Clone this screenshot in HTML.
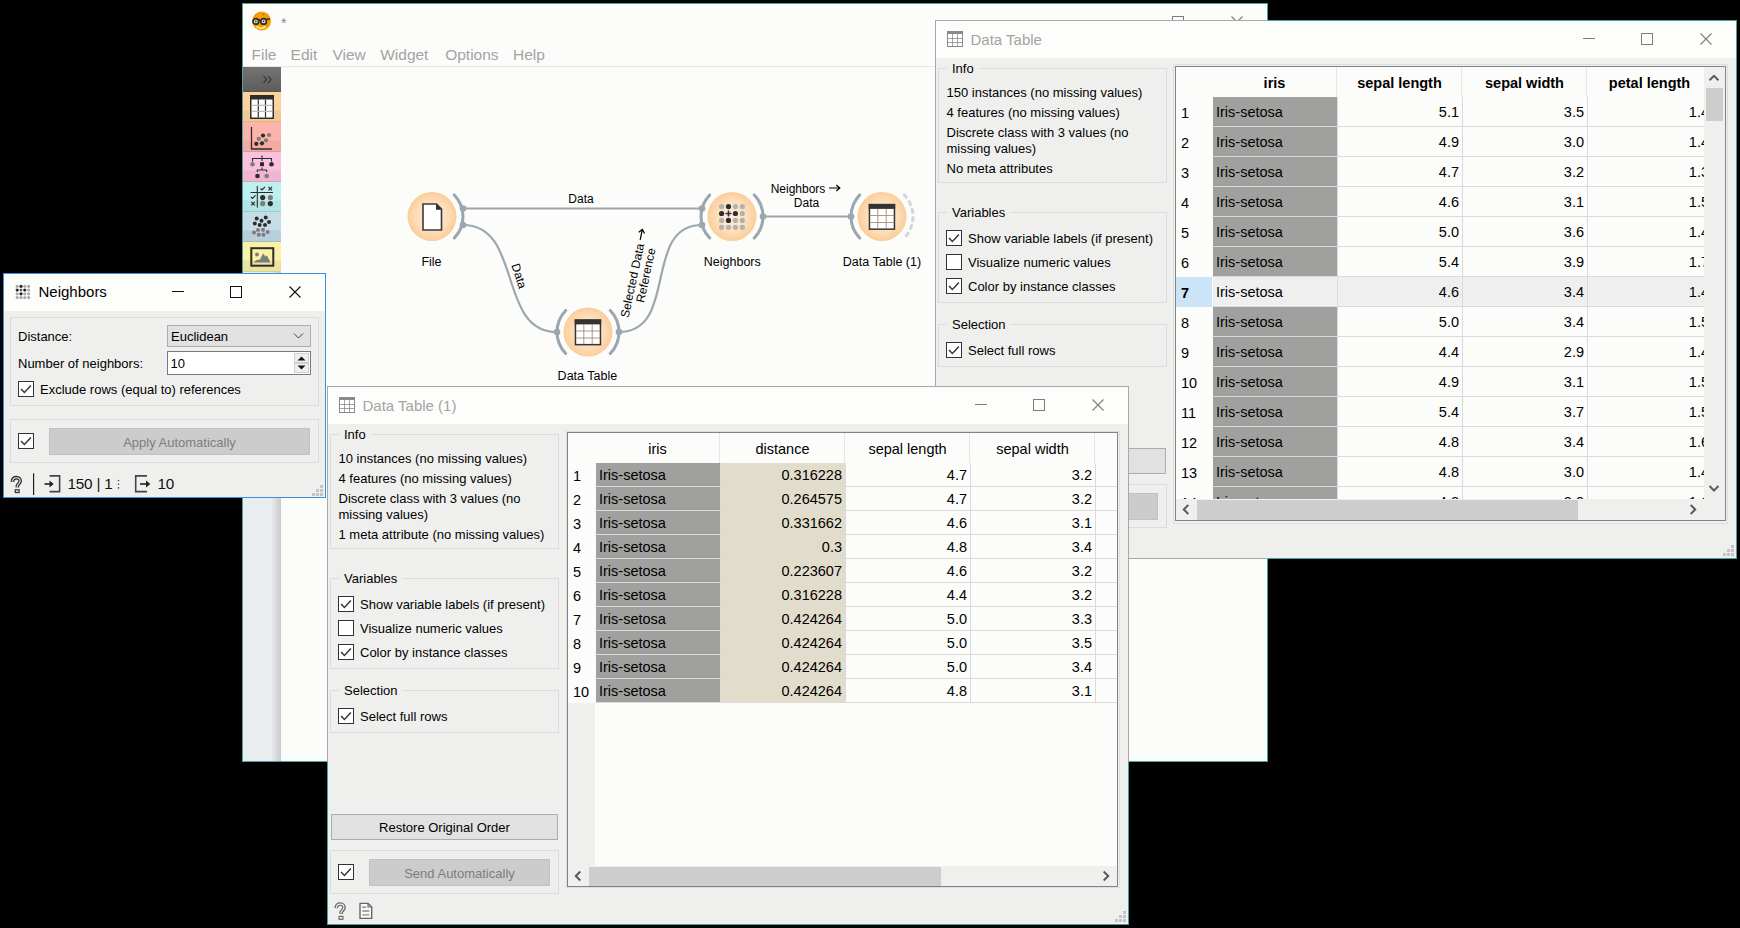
<!DOCTYPE html><html><head><meta charset="utf-8"><style>

html,body{margin:0;padding:0;}
body{width:1740px;height:928px;overflow:hidden;position:relative;background:#000;font-family:"Liberation Sans", sans-serif;}
div{box-sizing:border-box;}
.t{position:absolute;white-space:nowrap;line-height:1;}
.win{position:absolute;overflow:hidden;}
svg{position:absolute;overflow:visible;}

</style></head><body>
<div class="win" style="left:242px;top:3px;width:1026px;height:759px;background:#fcfdfb;border:1px solid #4aa3a3;"><div style="position:absolute;left:-243px;top:-4px;width:1740px;height:928px;">
<svg style="left:251px;top:12px" width="22" height="22" viewBox="0 0 22 22"><circle cx="10.6" cy="9" r="9.4" fill="#f59d00"/><path d="M5.5 14.6 Q10 17.8 14.8 14.6" stroke="#fde58a" stroke-width="2" fill="none"/><circle cx="4.8" cy="9.4" r="2.8" fill="#e6e6e6" stroke="#2b2b2b" stroke-width="1.7"/><circle cx="12.6" cy="9.4" r="2.8" fill="#e6e6e6" stroke="#2b2b2b" stroke-width="1.7"/><path d="M7.6 8.6 Q8.7 7.6 9.8 8.6 M15.3 7.6 L19 6.8" stroke="#2b2b2b" stroke-width="1.5" fill="none"/><circle cx="4.8" cy="9.4" r="0.8" fill="#222"/><circle cx="12.6" cy="9.4" r="0.8" fill="#222"/><circle cx="12.6" cy="2.6" r="0.6" fill="#555"/></svg>
<div class="t" style="left:281px;top:15.5px;font-size:14px;color:#7a8aa0;">*</div>
<div class="t" style="left:251.5px;top:47px;font-size:15.5px;color:#a3a3a3;">File</div>
<div class="t" style="left:290.6px;top:47px;font-size:15.5px;color:#a3a3a3;">Edit</div>
<div class="t" style="left:332.4px;top:47px;font-size:15.5px;color:#a3a3a3;">View</div>
<div class="t" style="left:380.2px;top:47px;font-size:15.5px;color:#a3a3a3;">Widget</div>
<div class="t" style="left:445.2px;top:47px;font-size:15.5px;color:#a3a3a3;">Options</div>
<div class="t" style="left:513px;top:47px;font-size:15.5px;color:#a3a3a3;">Help</div>
<div style="position:absolute;left:243px;top:66px;width:1024px;height:1px;background:#e6e6e6"></div>
<div style="position:absolute;left:243px;top:67px;width:38px;height:25px;background:linear-gradient(#737373,#5d5d5d);border-bottom:1px solid #555"></div>
<svg style="left:243px;top:67px" width="38" height="25"><path d="M20.5 9 L23.5 12.5 L20.5 16 M25 9 L28 12.5 L25 16" stroke="#2e2e2e" stroke-width="1.1" fill="none"/></svg>
<div style="position:absolute;left:243px;top:92px;width:38px;height:30px;background:linear-gradient(#fdd39b 0,#fdd39b 18px,#f1c892 19px,#f1c892 29px,#dcb684 29px);"></div>
<div style="position:absolute;left:243px;top:122px;width:38px;height:30px;background:linear-gradient(#fcb4aa 0,#fcb4aa 18px,#f2aaa2 19px,#f2aaa2 29px,#d89a94 29px);"></div>
<div style="position:absolute;left:243px;top:152px;width:38px;height:30px;background:linear-gradient(#f9c1dd 0,#f9c1dd 18px,#f0b5d0 19px,#f0b5d0 29px,#d6a3bb 29px);"></div>
<div style="position:absolute;left:243px;top:182px;width:38px;height:30px;background:linear-gradient(#bfefef 0,#bfefef 18px,#b3e3e3 19px,#b3e3e3 29px,#9ccdcd 29px);"></div>
<div style="position:absolute;left:243px;top:212px;width:38px;height:30px;background:linear-gradient(#c6dde8 0,#c6dde8 18px,#b8cfdb 19px,#b8cfdb 29px,#a5bcc8 29px);"></div>
<div style="position:absolute;left:243px;top:242px;width:38px;height:30px;background:linear-gradient(#faf1a6 0,#faf1a6 18px,#ede3a0 19px,#ede3a0 29px,#d6cd8f 29px);"></div>
<svg style="left:243px;top:92px" width="38" height="30"><rect x="7" y="3" width="24" height="24" fill="#2d2d2d"/><rect x="8.5" y="7.5" width="21" height="18" fill="#fff"/><path d="M15.3 7.5 V25.5 M22.5 7.5 V25.5" stroke="#2d2d2d" stroke-width="1.2"/><path d="M8.5 13.3 H29.5 M8.5 19.3 H29.5" stroke="#bbb" stroke-width="1.2"/></svg>
<svg style="left:243px;top:122px" width="38" height="30"><path d="M8.5 5 V27 H29" stroke="#2d2d2d" stroke-width="1.3" fill="none"/><circle cx="20" cy="13.5" r="2.1" fill="#2d2d2d"/><circle cx="26" cy="13" r="2.1" fill="#7c7c7c"/><circle cx="15.8" cy="16.8" r="2.1" fill="#7c7c7c"/><circle cx="23" cy="18.3" r="2.1" fill="#7c7c7c"/><circle cx="13.3" cy="21.8" r="2.1" fill="#2d2d2d"/><circle cx="19" cy="21.3" r="2.1" fill="#2d2d2d"/></svg>
<svg style="left:243px;top:152px" width="38" height="30"><path d="M9.5 9.5 V6.5 H28.5 V9.5 M19 3.5 V9 M14.3 20 V18 H23.7 V20 M19 15.5 V18" stroke="#2d2d2d" stroke-width="1.1" fill="none"/><circle cx="9.5" cy="12.2" r="2.3" fill="#7c7c7c"/><rect x="17" y="10.2" width="4" height="4" fill="#2d2d2d"/><circle cx="28.5" cy="12.2" r="2.3" fill="#2d2d2d"/><circle cx="14.5" cy="24" r="2.3" fill="#2d2d2d"/><circle cx="23.7" cy="24" r="2.3" fill="#7c7c7c"/></svg>
<svg style="left:243px;top:182px" width="38" height="30"><path d="M14.3 4 V25.5 M7.5 10.5 H30" stroke="#2d2d2d" stroke-width="1.1" fill="none"/><path d="M17.5 6.5 L19 8 L22 4.8 M25.5 4.8 L29 8.3 M29 4.8 L25.5 8.3 M8 15 L9.5 16.5 L12.5 13.3 M8.3 19.8 L11.8 23.3 M11.8 19.8 L8.3 23.3" stroke="#2d2d2d" stroke-width="1.2" fill="none"/><circle cx="19.7" cy="15.6" r="2.6" fill="#2d2d2d"/><circle cx="27.3" cy="15.6" r="2.6" fill="#7c7c7c"/><circle cx="19.7" cy="21.6" r="2.6" fill="#7c7c7c"/><circle cx="27.3" cy="21.6" r="2.6" fill="#2d2d2d"/></svg>
<svg style="left:243px;top:212px" width="38" height="30"><circle cx="13.699999999999989" cy="6.599999999999994" r="2" fill="#2d2d2d"/><circle cx="18.5" cy="8.699999999999989" r="2" fill="#2d2d2d"/><circle cx="22.69999999999999" cy="5.599999999999994" r="2" fill="#2d2d2d"/><circle cx="26" cy="10" r="2" fill="#2d2d2d"/><circle cx="11.800000000000011" cy="11.5" r="2" fill="#2d2d2d"/><circle cx="16.69999999999999" cy="13" r="2" fill="#2d2d2d"/><circle cx="22" cy="13" r="2" fill="#2d2d2d"/><circle cx="15" cy="18" r="2" fill="#7c7c7c"/><circle cx="20" cy="17.80000000000001" r="2" fill="#7c7c7c"/><circle cx="11" cy="20.400000000000006" r="2" fill="#7c7c7c"/><circle cx="24.69999999999999" cy="20" r="2" fill="#7c7c7c"/><circle cx="15.800000000000011" cy="22.69999999999999" r="2" fill="#7c7c7c"/><circle cx="20.5" cy="22.69999999999999" r="2" fill="#7c7c7c"/></svg>
<svg style="left:243px;top:242px" width="38" height="30"><rect x="8.3" y="6.2" width="22" height="17.5" fill="none" stroke="#2d2d2d" stroke-width="2"/><circle cx="14" cy="12.5" r="1.9" fill="#7c7c7c"/><path d="M10.5 20.5 Q13 17.5 17 17.5 L20 11.5 L22.5 14.5 L24 13.5 L27.5 20.5 Z" fill="#7c7c7c"/></svg>
<div style="position:absolute;left:243px;top:272px;width:38px;height:489px;background:linear-gradient(90deg,#e9edf0 0,#e9edf0 28px,#dcdedf 32px,#c8c9ca 38px);"></div>
<svg style="left:0;top:0" width="1740" height="928">
<defs><radialGradient id="ng" cx="50%" cy="50%" r="50%"><stop offset="0" stop-color="#fdefe0"/><stop offset="0.6" stop-color="#fddfbd"/><stop offset="1" stop-color="#fbcd98"/></radialGradient></defs>
<path d="M463 208.5 H702" stroke="#9ba7ae" stroke-width="2.2" fill="none"/>
<path d="M463 225 C523 225 497 332 557 332" stroke="#9ba7ae" stroke-width="2.2" fill="none"/>
<path d="M619 332 C679 332 642 225 702 225" stroke="#9ba7ae" stroke-width="2.2" fill="none"/>
<path d="M763 216.5 H851" stroke="#9ba7ae" stroke-width="2.2" fill="none"/>
<circle cx="432" cy="216.5" r="24.5" fill="url(#ng)"/>
<path d="M454.3 195.0 A31 31 0 0 1 454.3 238.0" stroke="#9ba7ae" stroke-width="3.1" fill="none" stroke-linecap="round"/>
<circle cx="588" cy="332" r="24.5" fill="url(#ng)"/>
<path d="M610.3 310.5 A31 31 0 0 1 610.3 353.5" stroke="#9ba7ae" stroke-width="3.1" fill="none" stroke-linecap="round"/>
<path d="M565.7 310.5 A31 31 0 0 0 565.7 353.5" stroke="#9ba7ae" stroke-width="3.1" fill="none" stroke-linecap="round"/>
<circle cx="732" cy="216.5" r="24.5" fill="url(#ng)"/>
<path d="M754.3 195.0 A31 31 0 0 1 754.3 238.0" stroke="#9ba7ae" stroke-width="3.1" fill="none" stroke-linecap="round"/>
<path d="M709.7 195.0 A31 31 0 0 0 709.7 238.0" stroke="#9ba7ae" stroke-width="3.1" fill="none" stroke-linecap="round"/>
<circle cx="882" cy="216.5" r="24.5" fill="url(#ng)"/>
<path d="M859.7 195.0 A31 31 0 0 0 859.7 238.0" stroke="#9ba7ae" stroke-width="3.1" fill="none" stroke-linecap="round"/>
<path d="M904.3 195.0 A31 31 0 0 1 904.3 238.0" stroke="#d3d7da" stroke-width="3.1" fill="none" stroke-linecap="round" stroke-dasharray="3.2 5"/>
<circle cx="463" cy="208.5" r="3.3" fill="#9ba7ae"/>
<circle cx="463" cy="225" r="3.3" fill="#9ba7ae"/>
<circle cx="557" cy="332" r="3.3" fill="#9ba7ae"/>
<circle cx="619" cy="332" r="3.3" fill="#9ba7ae"/>
<circle cx="702" cy="208.5" r="3.3" fill="#9ba7ae"/>
<circle cx="702" cy="225" r="3.3" fill="#9ba7ae"/>
<circle cx="763" cy="216.5" r="3.3" fill="#9ba7ae"/>
<circle cx="851" cy="216.5" r="3.3" fill="#9ba7ae"/>
<path d="M423 204 H436.5 L441.5 209 V230 H423 Z" fill="#fff" stroke="#3a3a3a" stroke-width="1.6"/><path d="M436 204 L441.8 209.8 L436 209.8 Z" fill="#2d2d2d"/>
<rect x="575.45" y="320.15" width="25" height="24.5" fill="#fff" stroke="#333" stroke-width="1.5"/><rect x="574.70" y="319.40" width="26.5" height="5" fill="#333"/><path d="M583.80 324.4 V344.40 M592.20 324.4 V344.40 M575.70 331.00 H600.20 M575.70 338.00 H600.20" stroke="#a58c7c" stroke-width="0.9"/>
<rect x="869.45" y="204.65" width="25" height="24.5" fill="#fff" stroke="#333" stroke-width="1.5"/><rect x="868.70" y="203.90" width="26.5" height="5" fill="#333"/><path d="M877.80 208.9 V228.90 M886.20 208.9 V228.90 M869.70 215.50 H894.20 M869.70 222.50 H894.20" stroke="#a58c7c" stroke-width="0.9"/>
<circle cx="721.6" cy="206.6" r="2.6" fill="#b2b2b2"/>
<circle cx="721.6" cy="213.5" r="2.6" fill="#2d2d2d"/>
<circle cx="721.6" cy="220.4" r="2.6" fill="#b2b2b2"/>
<circle cx="721.6" cy="227.3" r="2.6" fill="#b2b2b2"/>
<circle cx="728.5" cy="206.6" r="2.6" fill="#2d2d2d"/>
<circle cx="728.5" cy="213.5" r="2.6" fill="#b2b2b2"/>
<circle cx="728.5" cy="220.4" r="2.6" fill="#2d2d2d"/>
<circle cx="728.5" cy="227.3" r="2.6" fill="#b2b2b2"/>
<circle cx="735.4" cy="206.6" r="2.6" fill="#b2b2b2"/>
<circle cx="735.4" cy="213.5" r="2.6" fill="#2d2d2d"/>
<circle cx="735.4" cy="220.4" r="2.6" fill="#b2b2b2"/>
<circle cx="735.4" cy="227.3" r="2.6" fill="#b2b2b2"/>
<circle cx="742.3" cy="206.6" r="2.6" fill="#b2b2b2"/>
<circle cx="742.3" cy="213.5" r="2.6" fill="#b2b2b2"/>
<circle cx="742.3" cy="220.4" r="2.6" fill="#b2b2b2"/>
<circle cx="742.3" cy="227.3" r="2.6" fill="#b2b2b2"/>
<path d="M728.5 210.5 V216.5 M725.5 213.5 H731.5" stroke="#2d2d2d" stroke-width="1.2"/>
</svg>
<div class="t" style="left:331.5px;top:255.5px;width:200px;text-align:center;font-size:12.5px;color:#000;">File</div>
<div class="t" style="left:487.4px;top:370px;width:200px;text-align:center;font-size:12.5px;color:#000;">Data Table</div>
<div class="t" style="left:632.3px;top:255.5px;width:200px;text-align:center;font-size:12.5px;color:#000;">Neighbors</div>
<div class="t" style="left:782px;top:255.5px;width:200px;text-align:center;font-size:12.5px;color:#000;">Data Table (1)</div>
<div class="t" style="left:481px;top:192.5px;width:200px;text-align:center;font-size:12px;color:#000;">Data</div>
<div class="t" style="left:706px;top:182.5px;width:200px;text-align:center;font-size:12px;color:#000;">Neighbors<svg style="position:static;vertical-align:1px;margin-left:4px" width="12" height="8"><path d="M0 4 H10.5 M7.3 1 L10.8 4 L7.3 7" stroke="#000" stroke-width="1.2" fill="none"/></svg></div>
<div class="t" style="left:706.5px;top:197px;width:200px;text-align:center;font-size:12px;color:#000;">Data</div>
<div class="t" style="left:519.2px;top:275.5px;font-size:12px;transform:translate(-50%,-50%) rotate(72.4deg);">Data</div>
<div class="t" style="left:640.1px;top:273.7px;font-size:12px;line-height:12px;text-align:center;transform:translate(-50%,-50%) rotate(-77.9deg);">Selected Data<svg style="position:static;vertical-align:1px;margin-left:4px" width="12" height="8"><path d="M0 4 H10.5 M7.3 1 L10.8 4 L7.3 7" stroke="#000" stroke-width="1.2" fill="none"/></svg><br>Reference</div>
<div style="position:absolute;left:1114px;top:21px;width:12px;height:1px;background:#7c7c7c"></div><div style="position:absolute;left:1172px;top:16px;width:12px;height:12px;border:1px solid #7c7c7c"></div><svg style="left:1231px;top:16px" width="12" height="12"><path d="M0.5 0.5 L11.5 11.5 M11.5 0.5 L0.5 11.5" stroke="#7c7c7c" stroke-width="1.1"/></svg>
</div></div>
<div class="win" style="left:935px;top:20px;width:802px;height:539px;background:#eff0ee;"><div style="position:absolute;left:-935px;top:-20px;width:1740px;height:928px;">
<div style="position:absolute;left:936px;top:21px;width:800px;height:37px;background:#fdfefc"></div>
<svg style="left:947px;top:31px" width="16" height="16" viewBox="0 0 16 16"><rect x="0.5" y="0.5" width="15" height="15" fill="#fff" stroke="#8a8a8a"/><rect x="0" y="0" width="16" height="3" fill="#8a8a8a"/><path d="M5.5 3 V16 M10.5 3 V16 M0 7.5 H16 M0 11.5 H16" stroke="#8a8a8a" stroke-width="0.8"/></svg>
<div class="t" style="left:970.5px;top:31.5px;font-size:15px;color:#a3a3a3;">Data Table</div>
<div style="position:absolute;left:1583px;top:38px;width:12px;height:1px;background:#7c7c7c"></div><div style="position:absolute;left:1641px;top:33px;width:12px;height:12px;border:1px solid #7c7c7c"></div><svg style="left:1700px;top:33px" width="12" height="12"><path d="M0.5 0.5 L11.5 11.5 M11.5 0.5 L0.5 11.5" stroke="#7c7c7c" stroke-width="1.1"/></svg>
<div style="position:absolute;left:938px;top:68px;width:229px;height:115px;border:1px solid #dcdcdc;"></div><div class="t" style="left:947px;top:62px;padding:0 5px;background:#eff0ee;font-size:13px;color:#000;">Info</div>
<div class="t" style="left:946.5px;top:86px;font-size:13px;color:#000;">150 instances (no missing values)</div>
<div class="t" style="left:946.5px;top:106px;font-size:13px;color:#000;">4 features (no missing values)</div>
<div class="t" style="left:946.5px;top:126px;font-size:13px;color:#000;">Discrete class with 3 values (no</div>
<div class="t" style="left:946.5px;top:142px;font-size:13px;color:#000;">missing values)</div>
<div class="t" style="left:946.5px;top:162px;font-size:13px;color:#000;">No meta attributes</div>
<div style="position:absolute;left:938px;top:212px;width:229px;height:91px;border:1px solid #dcdcdc;"></div><div class="t" style="left:947px;top:206px;padding:0 5px;background:#eff0ee;font-size:13px;color:#000;">Variables</div>
<div style="position:absolute;left:946px;top:230px;width:16px;height:16px;background:#fff;border:1px solid #333;"></div><svg style="left:946px;top:230px" width="16" height="16"><path d="M3 7.9 L6.4 11.5 L12.9 4.6" stroke="#333" stroke-width="1.45" fill="none"/></svg>
<div class="t" style="left:968px;top:232px;font-size:13px;color:#000;">Show variable labels (if present)</div>
<div style="position:absolute;left:946px;top:254px;width:16px;height:16px;background:#fff;border:1px solid #333;"></div>
<div class="t" style="left:968px;top:256px;font-size:13px;color:#000;">Visualize numeric values</div>
<div style="position:absolute;left:946px;top:278px;width:16px;height:16px;background:#fff;border:1px solid #333;"></div><svg style="left:946px;top:278px" width="16" height="16"><path d="M3 7.9 L6.4 11.5 L12.9 4.6" stroke="#333" stroke-width="1.45" fill="none"/></svg>
<div class="t" style="left:968px;top:280px;font-size:13px;color:#000;">Color by instance classes</div>
<div style="position:absolute;left:938px;top:324px;width:229px;height:43px;border:1px solid #dcdcdc;"></div><div class="t" style="left:947px;top:318px;padding:0 5px;background:#eff0ee;font-size:13px;color:#000;">Selection</div>
<div style="position:absolute;left:946px;top:342px;width:16px;height:16px;background:#fff;border:1px solid #333;"></div><svg style="left:946px;top:342px" width="16" height="16"><path d="M3 7.9 L6.4 11.5 L12.9 4.6" stroke="#333" stroke-width="1.45" fill="none"/></svg>
<div class="t" style="left:968px;top:344px;font-size:13px;color:#000;">Select full rows</div>
<div style="position:absolute;left:939px;top:448px;width:227px;height:26px;background:#e1e1e1;border:1px solid #adadad"></div>
<div style="position:absolute;left:938px;top:484px;width:229px;height:44px;border:1px solid #dcdcdc;"></div>
<div style="position:absolute;left:977px;top:493px;width:181px;height:27px;background:#cccccc;border:1px solid #c2c2c2"></div>
<div style="position:absolute;left:1173px;top:64px;width:555px;height:460px;border:1px solid #dedede"></div>
<div style="position:absolute;left:1175px;top:66px;width:551px;height:455px;border:1px solid #7c838a;background:#fcfdfb"></div>
<div style="position:absolute;left:1176px;top:67px;width:528px;height:432px;overflow:hidden;"><div style="position:absolute;left:-1176px;top:-67px;width:1740px;height:928px;">
<div style="position:absolute;left:1212px;top:67px;width:125px;height:30px;border-right:1px solid #e6e6e6"></div>
<div class="t" style="left:1212px;top:76px;width:125px;text-align:center;font-size:14.5px;font-weight:bold;">iris</div>
<div style="position:absolute;left:1337px;top:67px;width:125px;height:30px;border-right:1px solid #e6e6e6"></div>
<div class="t" style="left:1337px;top:76px;width:125px;text-align:center;font-size:14.5px;font-weight:bold;">sepal length</div>
<div style="position:absolute;left:1462px;top:67px;width:125px;height:30px;border-right:1px solid #e6e6e6"></div>
<div class="t" style="left:1462px;top:76px;width:125px;text-align:center;font-size:14.5px;font-weight:bold;">sepal width</div>
<div style="position:absolute;left:1587px;top:67px;width:125px;height:30px;border-right:1px solid #e6e6e6"></div>
<div class="t" style="left:1587px;top:76px;width:125px;text-align:center;font-size:14.5px;font-weight:bold;">petal length</div>
<div style="position:absolute;left:1176px;top:97px;width:36px;height:30px;background:#fcfdfb;"></div>
<div class="t" style="left:1181px;top:106px;font-size:14.5px;color:#000;">1</div>
<div style="position:absolute;left:1213px;top:97px;width:124px;height:29px;background:#a0a19f"></div>
<div style="position:absolute;left:1212px;top:126px;width:500px;height:1px;background:#dadada"></div>
<div style="position:absolute;left:1337px;top:97px;width:1px;height:30px;background:#dadada"></div>
<div style="position:absolute;left:1462px;top:97px;width:1px;height:30px;background:#dadada"></div>
<div style="position:absolute;left:1587px;top:97px;width:1px;height:30px;background:#dadada"></div>
<div class="t" style="left:1216px;top:105px;font-size:14.5px;color:#000;">Iris-setosa</div>
<div class="t" style="left:1337px;top:105px;width:122px;text-align:right;font-size:14.5px;">5.1</div>
<div class="t" style="left:1462px;top:105px;width:122px;text-align:right;font-size:14.5px;">3.5</div>
<div class="t" style="left:1587px;top:105px;width:122px;text-align:right;font-size:14.5px;">1.4</div>
<div style="position:absolute;left:1176px;top:127px;width:36px;height:30px;background:#fcfdfb;"></div>
<div class="t" style="left:1181px;top:136px;font-size:14.5px;color:#000;">2</div>
<div style="position:absolute;left:1213px;top:127px;width:124px;height:29px;background:#a0a19f"></div>
<div style="position:absolute;left:1212px;top:156px;width:500px;height:1px;background:#dadada"></div>
<div style="position:absolute;left:1337px;top:127px;width:1px;height:30px;background:#dadada"></div>
<div style="position:absolute;left:1462px;top:127px;width:1px;height:30px;background:#dadada"></div>
<div style="position:absolute;left:1587px;top:127px;width:1px;height:30px;background:#dadada"></div>
<div class="t" style="left:1216px;top:135px;font-size:14.5px;color:#000;">Iris-setosa</div>
<div class="t" style="left:1337px;top:135px;width:122px;text-align:right;font-size:14.5px;">4.9</div>
<div class="t" style="left:1462px;top:135px;width:122px;text-align:right;font-size:14.5px;">3.0</div>
<div class="t" style="left:1587px;top:135px;width:122px;text-align:right;font-size:14.5px;">1.4</div>
<div style="position:absolute;left:1176px;top:157px;width:36px;height:30px;background:#fcfdfb;"></div>
<div class="t" style="left:1181px;top:166px;font-size:14.5px;color:#000;">3</div>
<div style="position:absolute;left:1213px;top:157px;width:124px;height:29px;background:#a0a19f"></div>
<div style="position:absolute;left:1212px;top:186px;width:500px;height:1px;background:#dadada"></div>
<div style="position:absolute;left:1337px;top:157px;width:1px;height:30px;background:#dadada"></div>
<div style="position:absolute;left:1462px;top:157px;width:1px;height:30px;background:#dadada"></div>
<div style="position:absolute;left:1587px;top:157px;width:1px;height:30px;background:#dadada"></div>
<div class="t" style="left:1216px;top:165px;font-size:14.5px;color:#000;">Iris-setosa</div>
<div class="t" style="left:1337px;top:165px;width:122px;text-align:right;font-size:14.5px;">4.7</div>
<div class="t" style="left:1462px;top:165px;width:122px;text-align:right;font-size:14.5px;">3.2</div>
<div class="t" style="left:1587px;top:165px;width:122px;text-align:right;font-size:14.5px;">1.3</div>
<div style="position:absolute;left:1176px;top:187px;width:36px;height:30px;background:#fcfdfb;"></div>
<div class="t" style="left:1181px;top:196px;font-size:14.5px;color:#000;">4</div>
<div style="position:absolute;left:1213px;top:187px;width:124px;height:29px;background:#a0a19f"></div>
<div style="position:absolute;left:1212px;top:216px;width:500px;height:1px;background:#dadada"></div>
<div style="position:absolute;left:1337px;top:187px;width:1px;height:30px;background:#dadada"></div>
<div style="position:absolute;left:1462px;top:187px;width:1px;height:30px;background:#dadada"></div>
<div style="position:absolute;left:1587px;top:187px;width:1px;height:30px;background:#dadada"></div>
<div class="t" style="left:1216px;top:195px;font-size:14.5px;color:#000;">Iris-setosa</div>
<div class="t" style="left:1337px;top:195px;width:122px;text-align:right;font-size:14.5px;">4.6</div>
<div class="t" style="left:1462px;top:195px;width:122px;text-align:right;font-size:14.5px;">3.1</div>
<div class="t" style="left:1587px;top:195px;width:122px;text-align:right;font-size:14.5px;">1.5</div>
<div style="position:absolute;left:1176px;top:217px;width:36px;height:30px;background:#fcfdfb;"></div>
<div class="t" style="left:1181px;top:226px;font-size:14.5px;color:#000;">5</div>
<div style="position:absolute;left:1213px;top:217px;width:124px;height:29px;background:#a0a19f"></div>
<div style="position:absolute;left:1212px;top:246px;width:500px;height:1px;background:#dadada"></div>
<div style="position:absolute;left:1337px;top:217px;width:1px;height:30px;background:#dadada"></div>
<div style="position:absolute;left:1462px;top:217px;width:1px;height:30px;background:#dadada"></div>
<div style="position:absolute;left:1587px;top:217px;width:1px;height:30px;background:#dadada"></div>
<div class="t" style="left:1216px;top:225px;font-size:14.5px;color:#000;">Iris-setosa</div>
<div class="t" style="left:1337px;top:225px;width:122px;text-align:right;font-size:14.5px;">5.0</div>
<div class="t" style="left:1462px;top:225px;width:122px;text-align:right;font-size:14.5px;">3.6</div>
<div class="t" style="left:1587px;top:225px;width:122px;text-align:right;font-size:14.5px;">1.4</div>
<div style="position:absolute;left:1176px;top:247px;width:36px;height:30px;background:#fcfdfb;"></div>
<div class="t" style="left:1181px;top:256px;font-size:14.5px;color:#000;">6</div>
<div style="position:absolute;left:1213px;top:247px;width:124px;height:29px;background:#a0a19f"></div>
<div style="position:absolute;left:1212px;top:276px;width:500px;height:1px;background:#dadada"></div>
<div style="position:absolute;left:1337px;top:247px;width:1px;height:30px;background:#dadada"></div>
<div style="position:absolute;left:1462px;top:247px;width:1px;height:30px;background:#dadada"></div>
<div style="position:absolute;left:1587px;top:247px;width:1px;height:30px;background:#dadada"></div>
<div class="t" style="left:1216px;top:255px;font-size:14.5px;color:#000;">Iris-setosa</div>
<div class="t" style="left:1337px;top:255px;width:122px;text-align:right;font-size:14.5px;">5.4</div>
<div class="t" style="left:1462px;top:255px;width:122px;text-align:right;font-size:14.5px;">3.9</div>
<div class="t" style="left:1587px;top:255px;width:122px;text-align:right;font-size:14.5px;">1.7</div>
<div style="position:absolute;left:1176px;top:277px;width:36px;height:30px;background:#cce4f7;"></div>
<div class="t" style="left:1181px;top:286px;font-size:14.5px;color:#000;font-weight:bold">7</div>
<div style="position:absolute;left:1213px;top:277px;width:124px;height:29px;background:#efefef"></div>
<div style="position:absolute;left:1337px;top:277px;width:375px;height:29px;background:#efefef"></div>
<div style="position:absolute;left:1212px;top:306px;width:500px;height:1px;background:#dadada"></div>
<div style="position:absolute;left:1337px;top:277px;width:1px;height:30px;background:#dadada"></div>
<div style="position:absolute;left:1462px;top:277px;width:1px;height:30px;background:#dadada"></div>
<div style="position:absolute;left:1587px;top:277px;width:1px;height:30px;background:#dadada"></div>
<div class="t" style="left:1216px;top:285px;font-size:14.5px;color:#000;">Iris-setosa</div>
<div class="t" style="left:1337px;top:285px;width:122px;text-align:right;font-size:14.5px;">4.6</div>
<div class="t" style="left:1462px;top:285px;width:122px;text-align:right;font-size:14.5px;">3.4</div>
<div class="t" style="left:1587px;top:285px;width:122px;text-align:right;font-size:14.5px;">1.4</div>
<div style="position:absolute;left:1176px;top:307px;width:36px;height:30px;background:#fcfdfb;"></div>
<div class="t" style="left:1181px;top:316px;font-size:14.5px;color:#000;">8</div>
<div style="position:absolute;left:1213px;top:307px;width:124px;height:29px;background:#a0a19f"></div>
<div style="position:absolute;left:1212px;top:336px;width:500px;height:1px;background:#dadada"></div>
<div style="position:absolute;left:1337px;top:307px;width:1px;height:30px;background:#dadada"></div>
<div style="position:absolute;left:1462px;top:307px;width:1px;height:30px;background:#dadada"></div>
<div style="position:absolute;left:1587px;top:307px;width:1px;height:30px;background:#dadada"></div>
<div class="t" style="left:1216px;top:315px;font-size:14.5px;color:#000;">Iris-setosa</div>
<div class="t" style="left:1337px;top:315px;width:122px;text-align:right;font-size:14.5px;">5.0</div>
<div class="t" style="left:1462px;top:315px;width:122px;text-align:right;font-size:14.5px;">3.4</div>
<div class="t" style="left:1587px;top:315px;width:122px;text-align:right;font-size:14.5px;">1.5</div>
<div style="position:absolute;left:1176px;top:337px;width:36px;height:30px;background:#fcfdfb;"></div>
<div class="t" style="left:1181px;top:346px;font-size:14.5px;color:#000;">9</div>
<div style="position:absolute;left:1213px;top:337px;width:124px;height:29px;background:#a0a19f"></div>
<div style="position:absolute;left:1212px;top:366px;width:500px;height:1px;background:#dadada"></div>
<div style="position:absolute;left:1337px;top:337px;width:1px;height:30px;background:#dadada"></div>
<div style="position:absolute;left:1462px;top:337px;width:1px;height:30px;background:#dadada"></div>
<div style="position:absolute;left:1587px;top:337px;width:1px;height:30px;background:#dadada"></div>
<div class="t" style="left:1216px;top:345px;font-size:14.5px;color:#000;">Iris-setosa</div>
<div class="t" style="left:1337px;top:345px;width:122px;text-align:right;font-size:14.5px;">4.4</div>
<div class="t" style="left:1462px;top:345px;width:122px;text-align:right;font-size:14.5px;">2.9</div>
<div class="t" style="left:1587px;top:345px;width:122px;text-align:right;font-size:14.5px;">1.4</div>
<div style="position:absolute;left:1176px;top:367px;width:36px;height:30px;background:#fcfdfb;"></div>
<div class="t" style="left:1181px;top:376px;font-size:14.5px;color:#000;">10</div>
<div style="position:absolute;left:1213px;top:367px;width:124px;height:29px;background:#a0a19f"></div>
<div style="position:absolute;left:1212px;top:396px;width:500px;height:1px;background:#dadada"></div>
<div style="position:absolute;left:1337px;top:367px;width:1px;height:30px;background:#dadada"></div>
<div style="position:absolute;left:1462px;top:367px;width:1px;height:30px;background:#dadada"></div>
<div style="position:absolute;left:1587px;top:367px;width:1px;height:30px;background:#dadada"></div>
<div class="t" style="left:1216px;top:375px;font-size:14.5px;color:#000;">Iris-setosa</div>
<div class="t" style="left:1337px;top:375px;width:122px;text-align:right;font-size:14.5px;">4.9</div>
<div class="t" style="left:1462px;top:375px;width:122px;text-align:right;font-size:14.5px;">3.1</div>
<div class="t" style="left:1587px;top:375px;width:122px;text-align:right;font-size:14.5px;">1.5</div>
<div style="position:absolute;left:1176px;top:397px;width:36px;height:30px;background:#fcfdfb;"></div>
<div class="t" style="left:1181px;top:406px;font-size:14.5px;color:#000;">11</div>
<div style="position:absolute;left:1213px;top:397px;width:124px;height:29px;background:#a0a19f"></div>
<div style="position:absolute;left:1212px;top:426px;width:500px;height:1px;background:#dadada"></div>
<div style="position:absolute;left:1337px;top:397px;width:1px;height:30px;background:#dadada"></div>
<div style="position:absolute;left:1462px;top:397px;width:1px;height:30px;background:#dadada"></div>
<div style="position:absolute;left:1587px;top:397px;width:1px;height:30px;background:#dadada"></div>
<div class="t" style="left:1216px;top:405px;font-size:14.5px;color:#000;">Iris-setosa</div>
<div class="t" style="left:1337px;top:405px;width:122px;text-align:right;font-size:14.5px;">5.4</div>
<div class="t" style="left:1462px;top:405px;width:122px;text-align:right;font-size:14.5px;">3.7</div>
<div class="t" style="left:1587px;top:405px;width:122px;text-align:right;font-size:14.5px;">1.5</div>
<div style="position:absolute;left:1176px;top:427px;width:36px;height:30px;background:#fcfdfb;"></div>
<div class="t" style="left:1181px;top:436px;font-size:14.5px;color:#000;">12</div>
<div style="position:absolute;left:1213px;top:427px;width:124px;height:29px;background:#a0a19f"></div>
<div style="position:absolute;left:1212px;top:456px;width:500px;height:1px;background:#dadada"></div>
<div style="position:absolute;left:1337px;top:427px;width:1px;height:30px;background:#dadada"></div>
<div style="position:absolute;left:1462px;top:427px;width:1px;height:30px;background:#dadada"></div>
<div style="position:absolute;left:1587px;top:427px;width:1px;height:30px;background:#dadada"></div>
<div class="t" style="left:1216px;top:435px;font-size:14.5px;color:#000;">Iris-setosa</div>
<div class="t" style="left:1337px;top:435px;width:122px;text-align:right;font-size:14.5px;">4.8</div>
<div class="t" style="left:1462px;top:435px;width:122px;text-align:right;font-size:14.5px;">3.4</div>
<div class="t" style="left:1587px;top:435px;width:122px;text-align:right;font-size:14.5px;">1.6</div>
<div style="position:absolute;left:1176px;top:457px;width:36px;height:30px;background:#fcfdfb;"></div>
<div class="t" style="left:1181px;top:466px;font-size:14.5px;color:#000;">13</div>
<div style="position:absolute;left:1213px;top:457px;width:124px;height:29px;background:#a0a19f"></div>
<div style="position:absolute;left:1212px;top:486px;width:500px;height:1px;background:#dadada"></div>
<div style="position:absolute;left:1337px;top:457px;width:1px;height:30px;background:#dadada"></div>
<div style="position:absolute;left:1462px;top:457px;width:1px;height:30px;background:#dadada"></div>
<div style="position:absolute;left:1587px;top:457px;width:1px;height:30px;background:#dadada"></div>
<div class="t" style="left:1216px;top:465px;font-size:14.5px;color:#000;">Iris-setosa</div>
<div class="t" style="left:1337px;top:465px;width:122px;text-align:right;font-size:14.5px;">4.8</div>
<div class="t" style="left:1462px;top:465px;width:122px;text-align:right;font-size:14.5px;">3.0</div>
<div class="t" style="left:1587px;top:465px;width:122px;text-align:right;font-size:14.5px;">1.4</div>
<div style="position:absolute;left:1176px;top:487px;width:36px;height:30px;background:#fcfdfb;"></div>
<div class="t" style="left:1181px;top:496px;font-size:14.5px;color:#000;">14</div>
<div style="position:absolute;left:1213px;top:487px;width:124px;height:29px;background:#a0a19f"></div>
<div style="position:absolute;left:1212px;top:516px;width:500px;height:1px;background:#dadada"></div>
<div style="position:absolute;left:1337px;top:487px;width:1px;height:30px;background:#dadada"></div>
<div style="position:absolute;left:1462px;top:487px;width:1px;height:30px;background:#dadada"></div>
<div style="position:absolute;left:1587px;top:487px;width:1px;height:30px;background:#dadada"></div>
<div class="t" style="left:1216px;top:495px;font-size:14.5px;color:#000;">Iris-setosa</div>
<div class="t" style="left:1337px;top:495px;width:122px;text-align:right;font-size:14.5px;">4.3</div>
<div class="t" style="left:1462px;top:495px;width:122px;text-align:right;font-size:14.5px;">3.0</div>
<div class="t" style="left:1587px;top:495px;width:122px;text-align:right;font-size:14.5px;">1.1</div>
</div></div>
<div style="position:absolute;left:1704px;top:67px;width:21px;height:432px;background:#eff0ee"></div>
<svg style="left:1704px;top:67px" width="20" height="432"><path d="M5.5 13.3 L10 8.8 L14.5 13.3" stroke="#5a5a5a" stroke-width="2" fill="none"/><path d="M5.5 419 L10 423.5 L14.5 419" stroke="#5a5a5a" stroke-width="2" fill="none"/></svg>
<div style="position:absolute;left:1706px;top:88px;width:17px;height:33px;background:#cdcdcd"></div>
<div style="position:absolute;left:1176px;top:499px;width:549px;height:21px;background:#eff0ee"></div>
<div style="position:absolute;left:1197px;top:500px;width:381px;height:20px;background:#cdcdcd"></div>
<svg style="left:1176px;top:499px" width="548" height="21"><path d="M12.3 6 L7.8 10.5 L12.3 15" stroke="#5a5a5a" stroke-width="2" fill="none"/><path d="M514.7 6 L519.2 10.5 L514.7 15" stroke="#5a5a5a" stroke-width="2" fill="none"/></svg>
<svg style="left:1723px;top:545px" width="11" height="11"><rect x="8" y="0" width="3" height="3" fill="#c4c4c4"/><rect x="4" y="4" width="3" height="3" fill="#c4c4c4"/><rect x="8" y="4" width="3" height="3" fill="#c4c4c4"/><rect x="0" y="8" width="3" height="3" fill="#c4c4c4"/><rect x="4" y="8" width="3" height="3" fill="#c4c4c4"/><rect x="8" y="8" width="3" height="3" fill="#c4c4c4"/></svg>
</div></div>
<div style="position:absolute;left:935px;top:20px;width:333px;height:1px;background:#a8a8a8"></div>
<div style="position:absolute;left:1268px;top:20px;width:469px;height:1px;background:#46a2a2"></div>
<div style="position:absolute;left:935px;top:20px;width:1px;height:539px;background:#a8a8a8"></div>
<div style="position:absolute;left:1736px;top:20px;width:1px;height:539px;background:#46a2a2"></div>
<div style="position:absolute;left:935px;top:558px;width:333px;height:1px;background:#a8a8a8"></div>
<div style="position:absolute;left:1268px;top:558px;width:469px;height:1px;background:#46a2a2"></div>
<div class="win" style="left:327px;top:386px;width:802px;height:539px;background:#eff0ee;"><div style="position:absolute;left:-327px;top:-386px;width:1740px;height:928px;">
<div style="position:absolute;left:328px;top:387px;width:800px;height:37px;background:#fdfefc"></div>
<svg style="left:339px;top:397px" width="16" height="16" viewBox="0 0 16 16"><rect x="0.5" y="0.5" width="15" height="15" fill="#fff" stroke="#8a8a8a"/><rect x="0" y="0" width="16" height="3" fill="#8a8a8a"/><path d="M5.5 3 V16 M10.5 3 V16 M0 7.5 H16 M0 11.5 H16" stroke="#8a8a8a" stroke-width="0.8"/></svg>
<div class="t" style="left:362.5px;top:397.5px;font-size:15px;color:#a3a3a3;">Data Table (1)</div>
<div style="position:absolute;left:975px;top:404px;width:12px;height:1px;background:#7c7c7c"></div><div style="position:absolute;left:1033px;top:399px;width:12px;height:12px;border:1px solid #7c7c7c"></div><svg style="left:1092px;top:399px" width="12" height="12"><path d="M0.5 0.5 L11.5 11.5 M11.5 0.5 L0.5 11.5" stroke="#7c7c7c" stroke-width="1.1"/></svg>
<div style="position:absolute;left:330px;top:434px;width:229px;height:115px;border:1px solid #dcdcdc;"></div><div class="t" style="left:339px;top:428px;padding:0 5px;background:#eff0ee;font-size:13px;color:#000;">Info</div>
<div class="t" style="left:338.5px;top:452px;font-size:13px;color:#000;">10 instances (no missing values)</div>
<div class="t" style="left:338.5px;top:472px;font-size:13px;color:#000;">4 features (no missing values)</div>
<div class="t" style="left:338.5px;top:492px;font-size:13px;color:#000;">Discrete class with 3 values (no</div>
<div class="t" style="left:338.5px;top:508px;font-size:13px;color:#000;">missing values)</div>
<div class="t" style="left:338.5px;top:528px;font-size:13px;color:#000;">1 meta attribute (no missing values)</div>
<div style="position:absolute;left:330px;top:578px;width:229px;height:91px;border:1px solid #dcdcdc;"></div><div class="t" style="left:339px;top:572px;padding:0 5px;background:#eff0ee;font-size:13px;color:#000;">Variables</div>
<div style="position:absolute;left:338px;top:596px;width:16px;height:16px;background:#fff;border:1px solid #333;"></div><svg style="left:338px;top:596px" width="16" height="16"><path d="M3 7.9 L6.4 11.5 L12.9 4.6" stroke="#333" stroke-width="1.45" fill="none"/></svg>
<div class="t" style="left:360px;top:598px;font-size:13px;color:#000;">Show variable labels (if present)</div>
<div style="position:absolute;left:338px;top:620px;width:16px;height:16px;background:#fff;border:1px solid #333;"></div>
<div class="t" style="left:360px;top:622px;font-size:13px;color:#000;">Visualize numeric values</div>
<div style="position:absolute;left:338px;top:644px;width:16px;height:16px;background:#fff;border:1px solid #333;"></div><svg style="left:338px;top:644px" width="16" height="16"><path d="M3 7.9 L6.4 11.5 L12.9 4.6" stroke="#333" stroke-width="1.45" fill="none"/></svg>
<div class="t" style="left:360px;top:646px;font-size:13px;color:#000;">Color by instance classes</div>
<div style="position:absolute;left:330px;top:690px;width:229px;height:43px;border:1px solid #dcdcdc;"></div><div class="t" style="left:339px;top:684px;padding:0 5px;background:#eff0ee;font-size:13px;color:#000;">Selection</div>
<div style="position:absolute;left:338px;top:708px;width:16px;height:16px;background:#fff;border:1px solid #333;"></div><svg style="left:338px;top:708px" width="16" height="16"><path d="M3 7.9 L6.4 11.5 L12.9 4.6" stroke="#333" stroke-width="1.45" fill="none"/></svg>
<div class="t" style="left:360px;top:710px;font-size:13px;color:#000;">Select full rows</div>
<div style="position:absolute;left:331px;top:814px;width:227px;height:26px;background:#e1e1e1;border:1px solid #adadad"></div>
<div class="t" style="left:331px;top:821px;width:227px;text-align:center;font-size:13px;">Restore Original Order</div>
<div style="position:absolute;left:330px;top:850px;width:229px;height:44px;border:1px solid #dcdcdc;"></div>
<div style="position:absolute;left:338px;top:864px;width:16px;height:16px;background:#fff;border:1px solid #333;"></div><svg style="left:338px;top:864px" width="16" height="16"><path d="M3 7.9 L6.4 11.5 L12.9 4.6" stroke="#333" stroke-width="1.45" fill="none"/></svg>
<div style="position:absolute;left:369px;top:859px;width:181px;height:27px;background:#cccccc;border:1px solid #c2c2c2"></div>
<div class="t" style="left:369px;top:867px;width:181px;text-align:center;font-size:13px;color:#7d7d7d">Send Automatically</div>
<svg style="left:333px;top:902px" width="50" height="20"><g transform="translate(-0.8,0)"><path d="M4 6.2 C4.2 3.4 5.9 2 8 2 C10.4 2 11.8 3.6 11.8 5.4 C11.8 7.6 9.6 8.5 9 10 L8.9 11.8" stroke="#6a6a6a" stroke-width="3.6" fill="none" stroke-linejoin="round"/><path d="M4.1 6 C4.3 3.5 5.9 2.1 8 2.1 C10.3 2.1 11.7 3.6 11.7 5.4 C11.7 7.5 9.6 8.5 9 10 L8.9 11.5" stroke="#eff0ee" stroke-width="1.1" fill="none"/><rect x="6.9" y="14.4" width="3.8" height="2.9" fill="#eff0ee" stroke="#6a6a6a" stroke-width="1.2"/></g><path d="M27 1.4 H35.2 L38.7 4.9 V16.4 H27 Z" stroke="#666" stroke-width="1.4" fill="#fafafa" stroke-linejoin="round"/><path d="M35 1.4 V5 H38.7" stroke="#666" stroke-width="1.2" fill="none"/><path d="M29.3 5.2 H33 M29.3 9 H36.3 M29.3 12.9 H36.3" stroke="#8a8a8a" stroke-width="1.4"/></svg>
<div style="position:absolute;left:566px;top:431px;width:554px;height:457px;border:1px solid #dedede"></div>
<div style="position:absolute;left:567px;top:432px;width:551px;height:455px;border:1px solid #7c838a;background:#fcfdfb"></div>
<div style="position:absolute;left:568px;top:433px;width:549px;height:433px;overflow:hidden;"><div style="position:absolute;left:-568px;top:-433px;width:1740px;height:928px;">
<div style="position:absolute;left:595px;top:433px;width:125px;height:30px;border-right:1px solid #e6e6e6"></div>
<div class="t" style="left:595px;top:442px;width:125px;text-align:center;font-size:14.5px;">iris</div>
<div style="position:absolute;left:720px;top:433px;width:125px;height:30px;border-right:1px solid #e6e6e6"></div>
<div class="t" style="left:720px;top:442px;width:125px;text-align:center;font-size:14.5px;">distance</div>
<div style="position:absolute;left:845px;top:433px;width:125px;height:30px;border-right:1px solid #e6e6e6"></div>
<div class="t" style="left:845px;top:442px;width:125px;text-align:center;font-size:14.5px;">sepal length</div>
<div style="position:absolute;left:970px;top:433px;width:125px;height:30px;border-right:1px solid #e6e6e6"></div>
<div class="t" style="left:970px;top:442px;width:125px;text-align:center;font-size:14.5px;">sepal width</div>
<div style="position:absolute;left:1095px;top:433px;width:125px;height:30px;border-right:1px solid #e6e6e6"></div>
<div class="t" style="left:1095px;top:442px;width:125px;text-align:center;font-size:14.5px;"></div>
<div style="position:absolute;left:568px;top:703px;width:27px;height:170px;background:#eff0ee"></div>
<div class="t" style="left:573px;top:469px;font-size:14.5px;color:#000;">1</div>
<div style="position:absolute;left:596px;top:463px;width:124px;height:23px;background:#a0a19f"></div>
<div style="position:absolute;left:721px;top:463px;width:124px;height:23px;background:#e2dccb"></div>
<div style="position:absolute;left:595px;top:486px;width:522px;height:1px;background:#dadada"></div>
<div style="position:absolute;left:720px;top:463px;width:1px;height:24px;background:#dadada"></div>
<div style="position:absolute;left:845px;top:463px;width:1px;height:24px;background:#dadada"></div>
<div style="position:absolute;left:970px;top:463px;width:1px;height:24px;background:#dadada"></div>
<div style="position:absolute;left:1095px;top:463px;width:1px;height:24px;background:#dadada"></div>
<div class="t" style="left:599px;top:468px;font-size:14.5px;color:#000;">Iris-setosa</div>
<div class="t" style="left:720px;top:468px;width:122px;text-align:right;font-size:14.5px;">0.316228</div>
<div class="t" style="left:845px;top:468px;width:122px;text-align:right;font-size:14.5px;">4.7</div>
<div class="t" style="left:970px;top:468px;width:122px;text-align:right;font-size:14.5px;">3.2</div>
<div class="t" style="left:573px;top:493px;font-size:14.5px;color:#000;">2</div>
<div style="position:absolute;left:596px;top:487px;width:124px;height:23px;background:#a0a19f"></div>
<div style="position:absolute;left:721px;top:487px;width:124px;height:23px;background:#e2dccb"></div>
<div style="position:absolute;left:595px;top:510px;width:522px;height:1px;background:#dadada"></div>
<div style="position:absolute;left:720px;top:487px;width:1px;height:24px;background:#dadada"></div>
<div style="position:absolute;left:845px;top:487px;width:1px;height:24px;background:#dadada"></div>
<div style="position:absolute;left:970px;top:487px;width:1px;height:24px;background:#dadada"></div>
<div style="position:absolute;left:1095px;top:487px;width:1px;height:24px;background:#dadada"></div>
<div class="t" style="left:599px;top:492px;font-size:14.5px;color:#000;">Iris-setosa</div>
<div class="t" style="left:720px;top:492px;width:122px;text-align:right;font-size:14.5px;">0.264575</div>
<div class="t" style="left:845px;top:492px;width:122px;text-align:right;font-size:14.5px;">4.7</div>
<div class="t" style="left:970px;top:492px;width:122px;text-align:right;font-size:14.5px;">3.2</div>
<div class="t" style="left:573px;top:517px;font-size:14.5px;color:#000;">3</div>
<div style="position:absolute;left:596px;top:511px;width:124px;height:23px;background:#a0a19f"></div>
<div style="position:absolute;left:721px;top:511px;width:124px;height:23px;background:#e2dccb"></div>
<div style="position:absolute;left:595px;top:534px;width:522px;height:1px;background:#dadada"></div>
<div style="position:absolute;left:720px;top:511px;width:1px;height:24px;background:#dadada"></div>
<div style="position:absolute;left:845px;top:511px;width:1px;height:24px;background:#dadada"></div>
<div style="position:absolute;left:970px;top:511px;width:1px;height:24px;background:#dadada"></div>
<div style="position:absolute;left:1095px;top:511px;width:1px;height:24px;background:#dadada"></div>
<div class="t" style="left:599px;top:516px;font-size:14.5px;color:#000;">Iris-setosa</div>
<div class="t" style="left:720px;top:516px;width:122px;text-align:right;font-size:14.5px;">0.331662</div>
<div class="t" style="left:845px;top:516px;width:122px;text-align:right;font-size:14.5px;">4.6</div>
<div class="t" style="left:970px;top:516px;width:122px;text-align:right;font-size:14.5px;">3.1</div>
<div class="t" style="left:573px;top:541px;font-size:14.5px;color:#000;">4</div>
<div style="position:absolute;left:596px;top:535px;width:124px;height:23px;background:#a0a19f"></div>
<div style="position:absolute;left:721px;top:535px;width:124px;height:23px;background:#e2dccb"></div>
<div style="position:absolute;left:595px;top:558px;width:522px;height:1px;background:#dadada"></div>
<div style="position:absolute;left:720px;top:535px;width:1px;height:24px;background:#dadada"></div>
<div style="position:absolute;left:845px;top:535px;width:1px;height:24px;background:#dadada"></div>
<div style="position:absolute;left:970px;top:535px;width:1px;height:24px;background:#dadada"></div>
<div style="position:absolute;left:1095px;top:535px;width:1px;height:24px;background:#dadada"></div>
<div class="t" style="left:599px;top:540px;font-size:14.5px;color:#000;">Iris-setosa</div>
<div class="t" style="left:720px;top:540px;width:122px;text-align:right;font-size:14.5px;">0.3</div>
<div class="t" style="left:845px;top:540px;width:122px;text-align:right;font-size:14.5px;">4.8</div>
<div class="t" style="left:970px;top:540px;width:122px;text-align:right;font-size:14.5px;">3.4</div>
<div class="t" style="left:573px;top:565px;font-size:14.5px;color:#000;">5</div>
<div style="position:absolute;left:596px;top:559px;width:124px;height:23px;background:#a0a19f"></div>
<div style="position:absolute;left:721px;top:559px;width:124px;height:23px;background:#e2dccb"></div>
<div style="position:absolute;left:595px;top:582px;width:522px;height:1px;background:#dadada"></div>
<div style="position:absolute;left:720px;top:559px;width:1px;height:24px;background:#dadada"></div>
<div style="position:absolute;left:845px;top:559px;width:1px;height:24px;background:#dadada"></div>
<div style="position:absolute;left:970px;top:559px;width:1px;height:24px;background:#dadada"></div>
<div style="position:absolute;left:1095px;top:559px;width:1px;height:24px;background:#dadada"></div>
<div class="t" style="left:599px;top:564px;font-size:14.5px;color:#000;">Iris-setosa</div>
<div class="t" style="left:720px;top:564px;width:122px;text-align:right;font-size:14.5px;">0.223607</div>
<div class="t" style="left:845px;top:564px;width:122px;text-align:right;font-size:14.5px;">4.6</div>
<div class="t" style="left:970px;top:564px;width:122px;text-align:right;font-size:14.5px;">3.2</div>
<div class="t" style="left:573px;top:589px;font-size:14.5px;color:#000;">6</div>
<div style="position:absolute;left:596px;top:583px;width:124px;height:23px;background:#a0a19f"></div>
<div style="position:absolute;left:721px;top:583px;width:124px;height:23px;background:#e2dccb"></div>
<div style="position:absolute;left:595px;top:606px;width:522px;height:1px;background:#dadada"></div>
<div style="position:absolute;left:720px;top:583px;width:1px;height:24px;background:#dadada"></div>
<div style="position:absolute;left:845px;top:583px;width:1px;height:24px;background:#dadada"></div>
<div style="position:absolute;left:970px;top:583px;width:1px;height:24px;background:#dadada"></div>
<div style="position:absolute;left:1095px;top:583px;width:1px;height:24px;background:#dadada"></div>
<div class="t" style="left:599px;top:588px;font-size:14.5px;color:#000;">Iris-setosa</div>
<div class="t" style="left:720px;top:588px;width:122px;text-align:right;font-size:14.5px;">0.316228</div>
<div class="t" style="left:845px;top:588px;width:122px;text-align:right;font-size:14.5px;">4.4</div>
<div class="t" style="left:970px;top:588px;width:122px;text-align:right;font-size:14.5px;">3.2</div>
<div class="t" style="left:573px;top:613px;font-size:14.5px;color:#000;">7</div>
<div style="position:absolute;left:596px;top:607px;width:124px;height:23px;background:#a0a19f"></div>
<div style="position:absolute;left:721px;top:607px;width:124px;height:23px;background:#e2dccb"></div>
<div style="position:absolute;left:595px;top:630px;width:522px;height:1px;background:#dadada"></div>
<div style="position:absolute;left:720px;top:607px;width:1px;height:24px;background:#dadada"></div>
<div style="position:absolute;left:845px;top:607px;width:1px;height:24px;background:#dadada"></div>
<div style="position:absolute;left:970px;top:607px;width:1px;height:24px;background:#dadada"></div>
<div style="position:absolute;left:1095px;top:607px;width:1px;height:24px;background:#dadada"></div>
<div class="t" style="left:599px;top:612px;font-size:14.5px;color:#000;">Iris-setosa</div>
<div class="t" style="left:720px;top:612px;width:122px;text-align:right;font-size:14.5px;">0.424264</div>
<div class="t" style="left:845px;top:612px;width:122px;text-align:right;font-size:14.5px;">5.0</div>
<div class="t" style="left:970px;top:612px;width:122px;text-align:right;font-size:14.5px;">3.3</div>
<div class="t" style="left:573px;top:637px;font-size:14.5px;color:#000;">8</div>
<div style="position:absolute;left:596px;top:631px;width:124px;height:23px;background:#a0a19f"></div>
<div style="position:absolute;left:721px;top:631px;width:124px;height:23px;background:#e2dccb"></div>
<div style="position:absolute;left:595px;top:654px;width:522px;height:1px;background:#dadada"></div>
<div style="position:absolute;left:720px;top:631px;width:1px;height:24px;background:#dadada"></div>
<div style="position:absolute;left:845px;top:631px;width:1px;height:24px;background:#dadada"></div>
<div style="position:absolute;left:970px;top:631px;width:1px;height:24px;background:#dadada"></div>
<div style="position:absolute;left:1095px;top:631px;width:1px;height:24px;background:#dadada"></div>
<div class="t" style="left:599px;top:636px;font-size:14.5px;color:#000;">Iris-setosa</div>
<div class="t" style="left:720px;top:636px;width:122px;text-align:right;font-size:14.5px;">0.424264</div>
<div class="t" style="left:845px;top:636px;width:122px;text-align:right;font-size:14.5px;">5.0</div>
<div class="t" style="left:970px;top:636px;width:122px;text-align:right;font-size:14.5px;">3.5</div>
<div class="t" style="left:573px;top:661px;font-size:14.5px;color:#000;">9</div>
<div style="position:absolute;left:596px;top:655px;width:124px;height:23px;background:#a0a19f"></div>
<div style="position:absolute;left:721px;top:655px;width:124px;height:23px;background:#e2dccb"></div>
<div style="position:absolute;left:595px;top:678px;width:522px;height:1px;background:#dadada"></div>
<div style="position:absolute;left:720px;top:655px;width:1px;height:24px;background:#dadada"></div>
<div style="position:absolute;left:845px;top:655px;width:1px;height:24px;background:#dadada"></div>
<div style="position:absolute;left:970px;top:655px;width:1px;height:24px;background:#dadada"></div>
<div style="position:absolute;left:1095px;top:655px;width:1px;height:24px;background:#dadada"></div>
<div class="t" style="left:599px;top:660px;font-size:14.5px;color:#000;">Iris-setosa</div>
<div class="t" style="left:720px;top:660px;width:122px;text-align:right;font-size:14.5px;">0.424264</div>
<div class="t" style="left:845px;top:660px;width:122px;text-align:right;font-size:14.5px;">5.0</div>
<div class="t" style="left:970px;top:660px;width:122px;text-align:right;font-size:14.5px;">3.4</div>
<div class="t" style="left:573px;top:685px;font-size:14.5px;color:#000;">10</div>
<div style="position:absolute;left:596px;top:679px;width:124px;height:23px;background:#a0a19f"></div>
<div style="position:absolute;left:721px;top:679px;width:124px;height:23px;background:#e2dccb"></div>
<div style="position:absolute;left:595px;top:702px;width:522px;height:1px;background:#dadada"></div>
<div style="position:absolute;left:720px;top:679px;width:1px;height:24px;background:#dadada"></div>
<div style="position:absolute;left:845px;top:679px;width:1px;height:24px;background:#dadada"></div>
<div style="position:absolute;left:970px;top:679px;width:1px;height:24px;background:#dadada"></div>
<div style="position:absolute;left:1095px;top:679px;width:1px;height:24px;background:#dadada"></div>
<div class="t" style="left:599px;top:684px;font-size:14.5px;color:#000;">Iris-setosa</div>
<div class="t" style="left:720px;top:684px;width:122px;text-align:right;font-size:14.5px;">0.424264</div>
<div class="t" style="left:845px;top:684px;width:122px;text-align:right;font-size:14.5px;">4.8</div>
<div class="t" style="left:970px;top:684px;width:122px;text-align:right;font-size:14.5px;">3.1</div>
</div></div>
<div style="position:absolute;left:568px;top:866px;width:549px;height:20px;background:#eff0ee"></div>
<div style="position:absolute;left:589px;top:867px;width:352px;height:19px;background:#cdcdcd"></div>
<svg style="left:568px;top:866px" width="549" height="20"><path d="M12.3 5.5 L7.8 10 L12.3 14.5" stroke="#5a5a5a" stroke-width="2" fill="none"/><path d="M535.7 5.5 L540.2 10 L535.7 14.5" stroke="#5a5a5a" stroke-width="2" fill="none"/></svg>
<svg style="left:1115px;top:911px" width="11" height="11"><rect x="8" y="0" width="3" height="3" fill="#c4c4c4"/><rect x="4" y="4" width="3" height="3" fill="#c4c4c4"/><rect x="8" y="4" width="3" height="3" fill="#c4c4c4"/><rect x="0" y="8" width="3" height="3" fill="#c4c4c4"/><rect x="4" y="8" width="3" height="3" fill="#c4c4c4"/><rect x="8" y="8" width="3" height="3" fill="#c4c4c4"/></svg>
</div></div>
<div style="position:absolute;left:327px;top:386px;width:802px;height:1px;background:#a8a8a8"></div>
<div style="position:absolute;left:327px;top:386px;width:1px;height:376px;background:#a8a8a8"></div>
<div style="position:absolute;left:327px;top:762px;width:1px;height:163px;background:#46a2a2"></div>
<div style="position:absolute;left:1128px;top:386px;width:1px;height:376px;background:#a8a8a8"></div>
<div style="position:absolute;left:1128px;top:762px;width:1px;height:163px;background:#46a2a2"></div>
<div style="position:absolute;left:327px;top:924px;width:802px;height:1px;background:#46a2a2"></div>
<div class="win" style="left:3px;top:273px;width:323px;height:225px;background:#eff0ee;border:1px solid #3b8ee0"><div style="position:absolute;left:-4px;top:-274px;width:1740px;height:928px;">
<div style="position:absolute;left:4px;top:274px;width:321px;height:37px;background:#fdfefc"></div>
<svg style="left:15px;top:285px" width="16" height="16"><circle cx="2.2" cy="1.3" r="1.6" fill="#aaa"/><circle cx="2.2" cy="5.0" r="1.6" fill="#222"/><circle cx="2.2" cy="8.8" r="1.6" fill="#aaa"/><circle cx="2.2" cy="12.6" r="1.6" fill="#aaa"/><circle cx="6.0" cy="1.3" r="1.6" fill="#222"/><circle cx="6.0" cy="5.0" r="1.6" fill="#aaa"/><circle cx="6.0" cy="8.8" r="1.6" fill="#222"/><circle cx="6.0" cy="12.6" r="1.6" fill="#aaa"/><circle cx="9.8" cy="1.3" r="1.6" fill="#aaa"/><circle cx="9.8" cy="5.0" r="1.6" fill="#222"/><circle cx="9.8" cy="8.8" r="1.6" fill="#aaa"/><circle cx="9.8" cy="12.6" r="1.6" fill="#aaa"/><circle cx="13.6" cy="1.3" r="1.6" fill="#aaa"/><circle cx="13.6" cy="5.0" r="1.6" fill="#aaa"/><circle cx="13.6" cy="8.8" r="1.6" fill="#aaa"/><circle cx="13.6" cy="12.6" r="1.6" fill="#aaa"/><circle cx="6" cy="5" r="0.9" fill="#333"/></svg>
<div class="t" style="left:38.5px;top:284px;font-size:15px;color:#000;">Neighbors</div>
<div style="position:absolute;left:172px;top:291px;width:12px;height:1px;background:#111"></div><div style="position:absolute;left:230px;top:286px;width:12px;height:12px;border:1px solid #111"></div><svg style="left:289px;top:286px" width="12" height="12"><path d="M0.5 0.5 L11.5 11.5 M11.5 0.5 L0.5 11.5" stroke="#111" stroke-width="1.1"/></svg>
<div style="position:absolute;left:10px;top:317px;width:309px;height:89px;border:1px solid #dcdcdc;"></div>
<div class="t" style="left:18px;top:330px;font-size:13px;color:#000;">Distance:</div>
<div class="t" style="left:18px;top:357px;font-size:13px;color:#000;">Number of neighbors:</div>
<div style="position:absolute;left:167px;top:325px;width:144px;height:22px;background:#e1e1e1;border:1px solid #adadad"></div>
<div class="t" style="left:171px;top:330px;font-size:13px;color:#000;">Euclidean</div>
<svg style="left:293px;top:332px" width="12" height="8"><path d="M1 1.5 L5.5 6 L10 1.5" stroke="#444" stroke-width="1" fill="none"/></svg>
<div style="position:absolute;left:167px;top:351px;width:144px;height:24px;background:#fff;border:1px solid #7a7a7a"></div>
<div class="t" style="left:170.5px;top:357px;font-size:13px;color:#000;">10</div>
<div style="position:absolute;left:294px;top:353px;width:15px;height:10px;background:#efefef;border:1px solid #cfcfcf"></div>
<div style="position:absolute;left:294px;top:363px;width:15px;height:10px;background:#efefef;border:1px solid #cfcfcf"></div>
<svg style="left:294px;top:353px" width="15" height="20"><path d="M3.5 7.5 L7.5 3.5 L11.5 7.5 Z M3.5 12.5 L7.5 16.5 L11.5 12.5 Z" fill="#111"/></svg>
<div style="position:absolute;left:18px;top:381px;width:16px;height:16px;background:#fff;border:1px solid #333;"></div><svg style="left:18px;top:381px" width="16" height="16"><path d="M3 7.9 L6.4 11.5 L12.9 4.6" stroke="#333" stroke-width="1.45" fill="none"/></svg>
<div class="t" style="left:40px;top:383px;font-size:13px;color:#000;">Exclude rows (equal to) references</div>
<div style="position:absolute;left:10px;top:419px;width:309px;height:44px;border:1px solid #dcdcdc;"></div>
<div style="position:absolute;left:18px;top:433px;width:16px;height:16px;background:#fff;border:1px solid #333;"></div><svg style="left:18px;top:433px" width="16" height="16"><path d="M3 7.9 L6.4 11.5 L12.9 4.6" stroke="#333" stroke-width="1.45" fill="none"/></svg>
<div style="position:absolute;left:49px;top:428px;width:261px;height:27px;background:#cccccc;border:1px solid #c2c2c2"></div>
<div class="t" style="left:49px;top:436px;width:261px;text-align:center;font-size:13px;color:#7d7d7d">Apply Automatically</div>
<svg style="left:4px;top:466px" width="180" height="34"><g transform="translate(4.4,9.6)"><path d="M4 6.2 C4.2 3.4 5.9 2 8 2 C10.4 2 11.8 3.6 11.8 5.4 C11.8 7.6 9.6 8.5 9 10 L8.9 11.8" stroke="#2e2e2e" stroke-width="3.6" fill="none" stroke-linejoin="round"/><path d="M4.1 6 C4.3 3.5 5.9 2.1 8 2.1 C10.3 2.1 11.7 3.6 11.7 5.4 C11.7 7.5 9.6 8.5 9 10 L8.9 11.5" stroke="#eff0ee" stroke-width="1.1" fill="none"/><rect x="6.9" y="14.2" width="3.8" height="2.7" fill="#eff0ee" stroke="#2e2e2e" stroke-width="1.2"/></g><path d="M29.6 7.2 V29" stroke="#111" stroke-width="1.1"/><path d="M45.6 9.9 H55.6 V25.6 H45.6" stroke="#444" stroke-width="1.6" fill="none"/><path d="M40.5 18 H46" stroke="#222" stroke-width="1.6"/><path d="M45.5 14.6 L49.7 18 L45.5 21.4 Z" fill="#222"/><circle cx="114.5" cy="14.5" r="0.8" fill="#444"/><circle cx="114.5" cy="18.2" r="0.8" fill="#444"/><circle cx="114.5" cy="21.9" r="0.8" fill="#444"/><path d="M143 9.9 H131.7 V25.6 H143" stroke="#444" stroke-width="1.6" fill="none"/><path d="M136 18 H142.5" stroke="#222" stroke-width="1.6"/><path d="M142 14.6 L146.3 18 L142 21.4 Z" fill="#222"/></svg>
<div class="t" style="left:67.5px;top:476px;font-size:15.3px;color:#111;letter-spacing:-0.2px">150 | 1</div>
<div class="t" style="left:157.5px;top:476px;font-size:15.3px;color:#111;letter-spacing:-0.2px">10</div>
<svg style="left:312px;top:485px" width="11" height="11"><rect x="8" y="0" width="3" height="3" fill="#c4c4c4"/><rect x="4" y="4" width="3" height="3" fill="#c4c4c4"/><rect x="8" y="4" width="3" height="3" fill="#c4c4c4"/><rect x="0" y="8" width="3" height="3" fill="#c4c4c4"/><rect x="4" y="8" width="3" height="3" fill="#c4c4c4"/><rect x="8" y="8" width="3" height="3" fill="#c4c4c4"/></svg>
</div></div>
</body></html>
